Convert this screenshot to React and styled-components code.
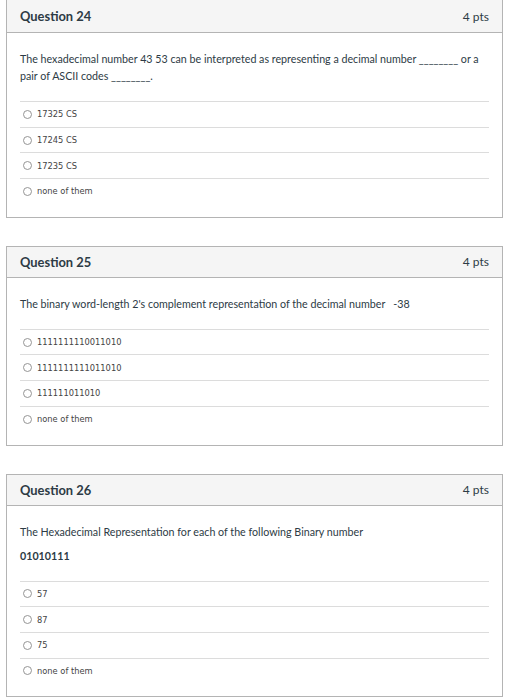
import React from 'react';
import styled, { createGlobalStyle } from 'styled-components';

const GlobalStyle = createGlobalStyle`
  body {
    margin: 0;
    background: #ffffff;
    font-family: Lato, "Open Sans", sans-serif;
    color: #2d3b45;
  }
`;

const Page = styled.div`
  padding: 0 2px 0 6px;
  margin-top: -1px;
`;

const Header = styled.div`
  height: 30px;
  padding: 0 13px;
  display: flex;
  align-items: center;
  justify-content: space-between;
  background: #f5f5f5;
  border-bottom: 1px solid #b4b4b4;
`;

const Card = styled.div`
  border: 1px solid #b4b4b4;
  background: #fff;
  margin-bottom: 28px;

  &:first-of-type ${Header} {
    height: 32px;
  }
`;

const Title = styled.span`
  font-weight: 700;
  font-size: 12.9px;
  color: #2d3b45;
`;

const Points = styled.span`
  font-size: 12px;
  color: #2d3b45;
`;

const Body = styled.div`
  padding: 17px 13px 13px;
`;

const Text = styled.p`
  margin: 0 0 ${props => props.last ? '17px' : '7px'};
  font-size: 10.7px;
  line-height: 17px;
  font-weight: ${props => props.bold ? 700 : 400};
`;

const Answers = styled.div``;

const Answer = styled.label`
  display: flex;
  align-items: center;
  height: 24.7px;
  border-top: 1px solid #dcdcdc;
  padding-left: 3px;
  font-family: "DejaVu Sans", Verdana, sans-serif;
  font-size: 8.3px;
  color: #444;
`;

const Radio = styled.span`
  width: 9px;
  height: 9px;
  border: 1px solid #959595;
  border-radius: 50%;
  margin-right: 5px;
  flex-shrink: 0;
  box-sizing: border-box;
`;

const questions = [
  {
    num: 24,
    text: ['The hexadecimal number 43 53 can be interpreted as representing a decimal number ________ or a pair of ASCII codes ________.'],
    answers: ['17325 CS', '17245 CS', '17235 CS', 'none of them'],
  },
  {
    num: 25,
    text: ['The binary word-length 2\'s complement representation of the decimal number \u00a0 -38'],
    answers: ['1111111110011010', '1111111111011010', '111111011010', 'none of them'],
  },
  {
    num: 26,
    text: ['The Hexadecimal Representation for each of the following Binary number'],
    bold: '01010111',
    answers: ['57', '87', '75', 'none of them'],
  },
];

const App = () => {
  return (
    <Page>
      <GlobalStyle />
      {questions.map(q => (
        <Card key={q.num}>
          <Header>
            <Title>Question {q.num}</Title>
            <Points>4 pts</Points>
          </Header>
          <Body>
            {q.text.map((t, i) => (
              <Text key={i} last={!q.bold}>{t}</Text>
            ))}
            {q.bold && <Text bold last>{q.bold}</Text>}
            <Answers>
              {q.answers.map(a => (
                <Answer key={a}>
                  <Radio />
                  {a}
                </Answer>
              ))}
            </Answers>
          </Body>
        </Card>
      ))}
    </Page>
  );
};

export default App;
